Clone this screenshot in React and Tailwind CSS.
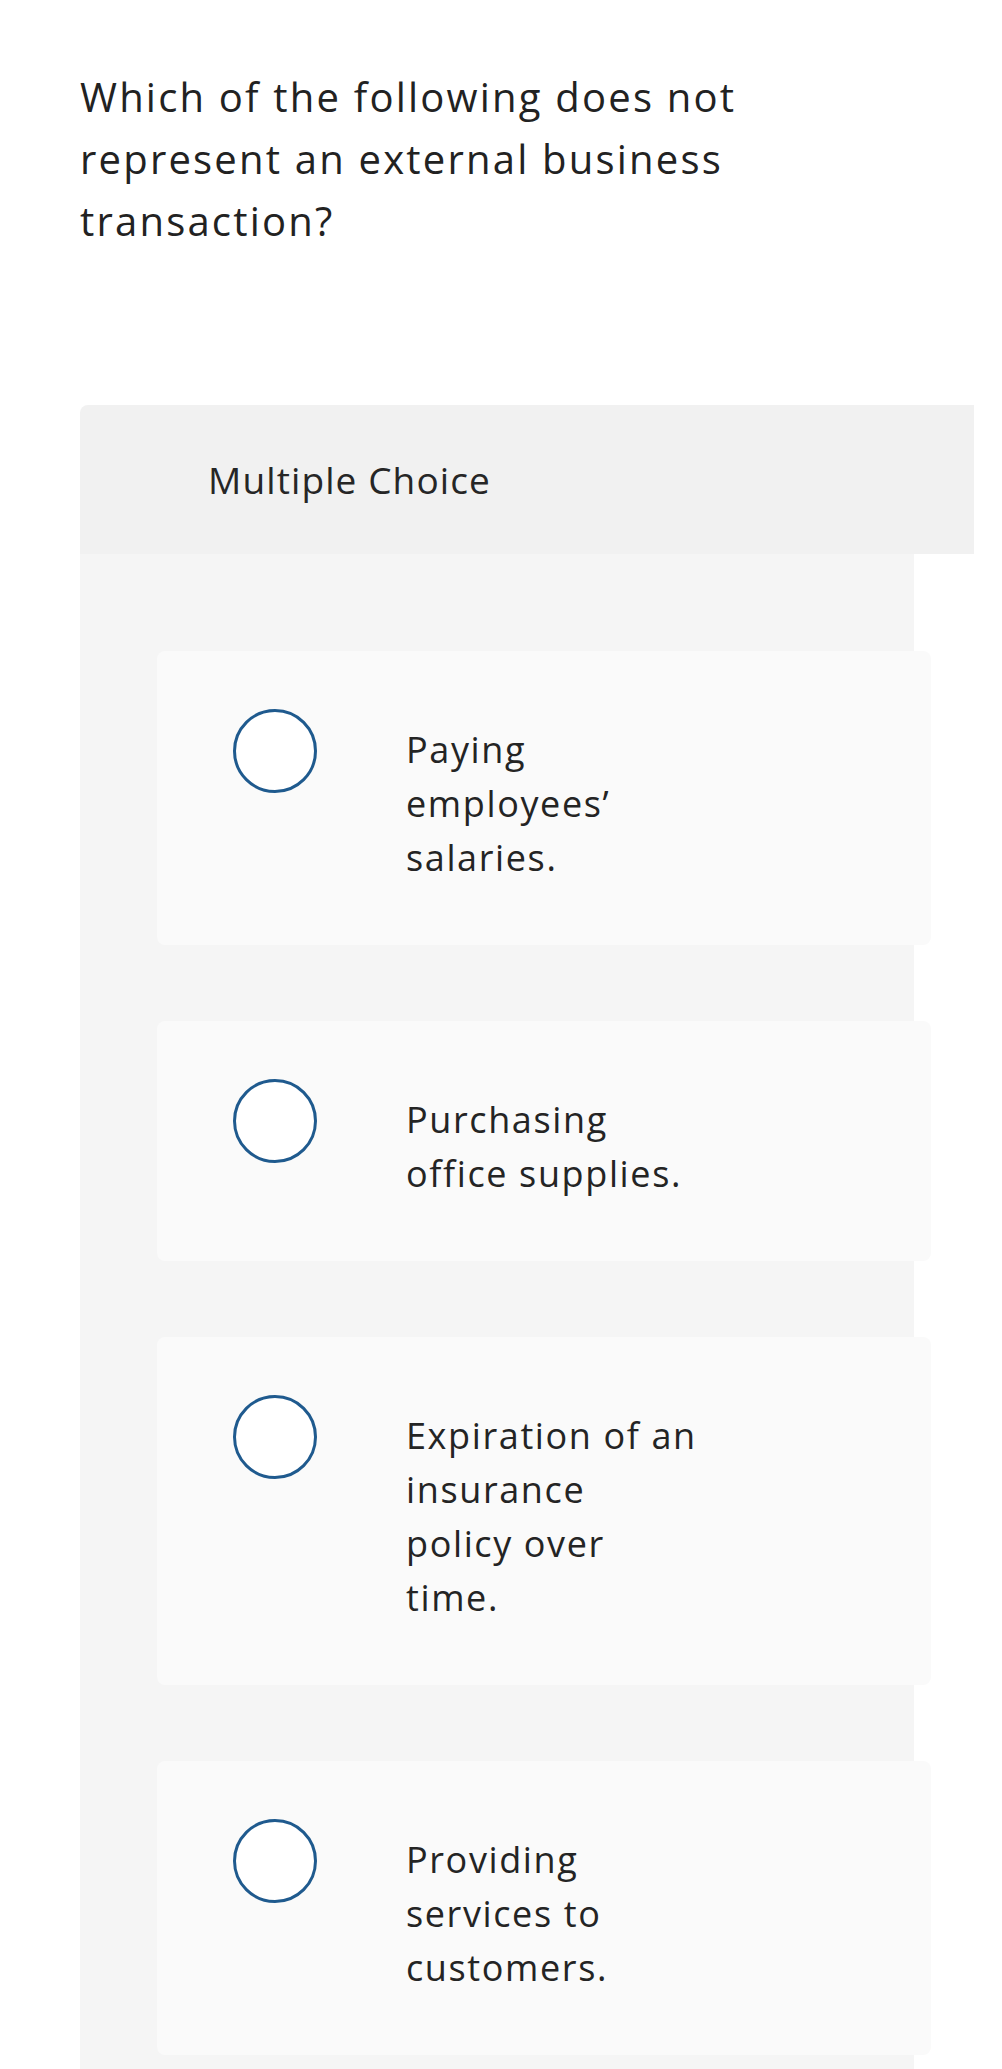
import { useState } from "react";

const options = [
  { id: "a", lines: ["Paying", "employees’", "salaries."] },
  { id: "b", lines: ["Purchasing", "office supplies."] },
  { id: "c", lines: ["Expiration of an", "insurance", "policy over", "time."] },
  { id: "d", lines: ["Providing", "services to", "customers."] },
];

function Option({ option, selected, onSelect }) {
  return (
    <button
      type="button"
      onClick={() => onSelect(option.id)}
      className="flex w-[774px] items-start rounded-lg bg-[#fafafa] pt-[58px] pb-[60px] pl-[76px] text-left"
    >
      <span className="flex h-[84px] w-[84px] shrink-0 items-center justify-center rounded-full border-[3px] border-[#1f5a8e] bg-white">
        {selected && <span className="h-[44px] w-[44px] rounded-full bg-[#1f5a8e]" />}
      </span>
      <span className="mt-[14px] ml-[89px] text-[36px] leading-[54px] tracking-[0.045em] text-[#242424]">
        {option.lines.map((line) => (
          <span key={line} className="block whitespace-nowrap">
            {line}
          </span>
        ))}
      </span>
    </button>
  );
}

export default function App() {
  const [selected, setSelected] = useState(null);

  return (
    <div className="min-h-[2069px] bg-white font-['Open_Sans',sans-serif]">
      <div className="px-[80px] pt-[66px]">
        <h1 className="text-[40px] leading-[62px] font-normal tracking-[0.055em] text-[#222]">
          Which of the following does not
          <br />
          represent an external business
          <br />
          transaction?
        </h1>
      </div>

      <div className="mt-[153px] ml-[80px]">
        <div className="flex h-[149px] w-[894px] items-center rounded-tl-lg bg-[#f1f1f1] pl-[128px]">
          <span className="text-[37px] tracking-[0.03em] text-[#262626]">Multiple Choice</span>
        </div>
        <div className="flex min-h-[1515px] w-[834px] flex-col gap-[76px] bg-[#f5f5f5] pt-[97px] pb-[40px] pl-[77px]">
          {options.map((o) => (
            <Option key={o.id} option={o} selected={selected === o.id} onSelect={setSelected} />
          ))}
        </div>
      </div>
    </div>
  );
}
